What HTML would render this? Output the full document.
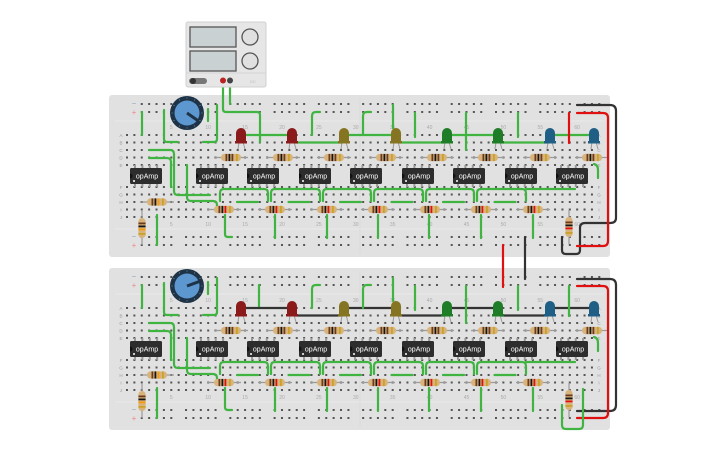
<!DOCTYPE html>
<html><head><meta charset="utf-8"><style>
html,body{margin:0;padding:0;background:#fff;width:725px;height:453px;overflow:hidden}
svg{display:block}
</style></head><body>
<svg id="s" width="725" height="453" viewBox="0 0 725 453" xmlns="http://www.w3.org/2000/svg" font-family="Liberation Sans, sans-serif"></svg>
<script>
var o='';
function X(c){return 127+(c+1)*7.38;}
var G='#3fb441';
function wire(d,col,w){o+='<path d="'+d+'" fill="none" stroke="'+(col||G)+'" stroke-width="'+(w||2.2)+'" stroke-linecap="round" stroke-linejoin="round"/>';}
function res(cx,cy,bands,vert){
 var t=vert?'rotate(90 '+cx+' '+cy+')':'';
 o+='<g transform="'+t+'"><line x1="'+(cx-17)+'" y1="'+cy+'" x2="'+(cx+17)+'" y2="'+cy+'" stroke="#9a9a9a" stroke-width="1.2"/>';
 o+='<rect x="'+(cx-10)+'" y="'+(cy-3.6)+'" width="20" height="7.2" rx="3.4" fill="#d8b47c"/>';
 var xs=[-5.5,-2.5,0.5,5];var cs=bands.concat(['#c9a227']);
 for(var i=0;i<4;i++)o+='<rect x="'+(cx+xs[i])+'" y="'+(cy-3.6)+'" width="1.8" height="7.2" fill="'+cs[i]+'"/>';
 o+='</g>';
}
var BR='#6b3a1f',BK='#151515',RD='#e01010',OR='#f39c12';
function led(cx,cy,col){
 o+='<line x1="'+(cx-2)+'" y1="'+(cy+6)+'" x2="'+(cx-3)+'" y2="'+(cy+13)+'" stroke="#999" stroke-width="1"/><line x1="'+(cx+2)+'" y1="'+(cy+6)+'" x2="'+(cx+4)+'" y2="'+(cy+13)+'" stroke="#999" stroke-width="1"/>';
 o+='<path d="M'+(cx-5)+','+(cy+7)+' V'+(cy-3)+' A5,5 0 0 1 '+(cx+5)+','+(cy-3)+' V'+(cy+7)+' Z" fill="'+col+'"/>';
 o+='<rect x="'+(cx-6)+'" y="'+(cy+5)+'" width="12" height="2.5" fill="'+col+'"/>';
}
function opamp(cx,cy){
 for(var i=0;i<4;i++){var px=cx-11+i*7.38;o+='<rect x="'+(px-1)+'" y="'+(cy-11)+'" width="2" height="4" fill="#999"/><rect x="'+(px-1)+'" y="'+(cy+7)+'" width="2" height="4" fill="#999"/>';}
 o+='<rect x="'+(cx-16)+'" y="'+(cy-8)+'" width="32" height="16" rx="1.5" fill="#2d2d2d"/>';
 o+='<path d="M'+(cx-16)+','+(cy-2.5)+' a2.5,2.5 0 0 1 0,5z" fill="#111"/>';
 o+='<circle cx="'+(cx-12)+'" cy="'+(cy+5)+'" r="1" fill="#fff"/>';
 o+='<text x="'+(cx+1)+'" y="'+(cy+2.5)+'" font-size="7" fill="#fff" text-anchor="middle">opAmp</text>';
}
function pot(cx,cy,ang){
 o+='<circle cx="'+cx+'" cy="'+cy+'" r="17" fill="#1e3347"/><circle cx="'+cx+'" cy="'+cy+'" r="12.5" fill="#5d97d0"/>';
 for(var i=0;i<12;i++){var a=i*Math.PI/6;o+='<circle cx="'+(cx+15*Math.cos(a))+'" cy="'+(cy+15*Math.sin(a))+'" r="0.5" fill="#7aa"/>';}
 var a=ang*Math.PI/180;o+='<line x1="'+cx+'" y1="'+cy+'" x2="'+(cx+14*Math.cos(a))+'" y2="'+(cy+14*Math.sin(a))+'" stroke="#1e3347" stroke-width="3"/>';
}
function board(dy,second){
 o+='<rect x="109" y="'+(95+dy)+'" width="501" height="162" rx="3" fill="#e1e1e1"/>';
 o+='<line x1="115" y1="'+(121+dy)+'" x2="604" y2="'+(121+dy)+'" stroke="#e9e9e9" stroke-width="1"/><line x1="115" y1="'+(229+dy)+'" x2="604" y2="'+(229+dy)+'" stroke="#e9e9e9" stroke-width="1"/>';
 o+='<line x1="360" y1="'+(98+dy)+'" x2="360" y2="'+(254+dy)+'" stroke="#d6d6d6" stroke-width="0.6"/>';
 var ry=[104,112,237,245];
 for(var r=0;r<4;r++)for(var i=0;i<63;i++){if(i%6==5)continue;o+='<rect x="'+(X(1)+i*7.38-1)+'" y="'+(ry[r]+dy-1)+'" width="2" height="2" fill="#555"/>';}
 var rows=[135,142.5,150,157.5,165,187,194.5,202,209.5,217];var L='ABCDEFGHIJ';
 for(var r=0;r<10;r++){for(var c=-1;c<=62;c++)o+='<rect x="'+(X(c)-1)+'" y="'+(rows[r]+dy-1)+'" width="2" height="2" fill="#555"/>';
  o+='<text x="121" y="'+(rows[r]+dy+1.8)+'" font-size="4.5" fill="#999" text-anchor="middle">'+L[r]+'</text><text x="599" y="'+(rows[r]+dy+1.8)+'" font-size="4.5" fill="#999" text-anchor="middle">'+L[r]+'</text>';}
 for(var n=5;n<=60;n+=5){o+='<text x="'+X(n)+'" y="'+(129+dy)+'" font-size="5" fill="#aaa" text-anchor="middle">'+n+'</text><text x="'+X(n)+'" y="'+(226+dy)+'" font-size="5" fill="#aaa" text-anchor="middle">'+n+'</text>';}
 o+='<text x="134" y="'+(106+dy)+'" font-size="8" fill="#8ab" text-anchor="middle">−</text><text x="134" y="'+(115+dy)+'" font-size="8" fill="#e88" text-anchor="middle">+</text>';
 o+='<text x="134" y="'+(239+dy)+'" font-size="8" fill="#8ab" text-anchor="middle">−</text><text x="134" y="'+(248+dy)+'" font-size="8" fill="#e88" text-anchor="middle">+</text>';
 function W(d,c){wire(d.replace(/Y(-?[\d.]+)/g,function(m,v){return (parseFloat(v)+dy);}),c);}
 W('M142,Y112 VY135');
 W('M164,Y110 VY139 Q164,Y142 167,Y142 H178');
 W('M217,Y105 VY139 Q217,Y142 214,Y142 H203');
 W('M208,Y109 VY121');
 if(!second){wire('M223,80 V109 Q223,112 226,112 H257 Q260,112 260,115 V142');wire('M230,80 V104');}
 else W('M259,Y112 VY135');
 W('M149,Y150 H170 Q174,Y150 174,Y154 VY191 Q174,Y195 178,Y195 H210');
 W('M149,Y158 H167 Q171,Y158 171,Y162 VY187');
 W('M187,Y165 VY197 Q187,Y201 191,Y201 H213 Q217,Y201 217,Y205 VY209');
 var ax=[217,268,320,371,423,474,526];
 for(var i=0;i<ax.length-1;i++){var a=ax[i]+3,b=ax[i+1];W('M'+a+',Y201 VY193 Q'+a+',Y189 '+(a+4)+',Y189 H'+(b-4)+' Q'+b+',Y189 '+b+',Y193 VY201');}
 W('M526,Y189 H575');
 for(var i=0;i<6;i++){var s=237+i*51.5;W('M'+s+',Y202 H'+(s+21));}
 W('M157,Y215 VY245');
 W('M225,Y215 VY234 Q225,Y237 228,Y237 H232');
 [275,327,378,429,481,533].forEach(function(x){W('M'+x+',Y215 VY238');});
 var lx=[241,292,344,396,447,498,550,594];
 for(var i=0;i<7;i++){var yy=(i%2==0)?135:142.5;W('M'+(lx[i]+3)+',Y'+yy+' H'+(lx[i+1]-2),second?'#333':G);}
 W('M312,Y135 VY116 Q312,Y112 316,Y112 H320');
 W('M363,Y135 VY116 Q363,Y112 367,Y112 H371');
 W('M393,Y105 VY128');W('M415,Y113 VY137');W('M466,Y113 VY150');W('M518,Y113 VY137');
 W('M569,Y113 VY143',second?G:'#e01010');
 W('M594,Y164 Q598,Y165 598,Y170 VY178');
 pot(187,113+dy,second?-20:35);
 var lc=['#8b1a1a','#8b1a1a','#857421','#857421','#1f7d27','#1f7d27','#1f5e85','#1f5e85'];
 for(var i=0;i<8;i++)led(lx[i],136+dy,lc[i]);
 [231,283,334,386,437,488,540,592].forEach(function(x){res(x,157.5+dy,[BR,BK,BR]);});
 [224,275,327,378,430,481,533].forEach(function(x){res(x,209.5+dy,[BR,BK,RD]);});
 res(157,202+dy,[BR,BK,OR]);
 res(142,228+dy,[BR,BK,OR],true);
 res(569,227+dy,[BR,BK,RD],true);
 [146,212,263,315,366,418,469,521,572].forEach(function(x){opamp(x,176+dy);});
}
board(0,false);
board(173,true);
wire('M577,105 H610 Q616,105 616,111 V218 Q616,223 610,223 H585 Q580,223 580,228 V250 Q580,254 576,254 H566 Q562,254 562,250 V237','#333');
wire('M577,113 H603 Q608,113 608,118 V241 Q608,246 603,246 H577','#e01010');
wire('M503,245 V287','#e01010');
wire('M525,237 V279','#333');
wire('M577,279 H610 Q616,279 616,285 V405 Q616,411 610,411 H577','#333');
wire('M577,286 H603 Q608,286 608,291 V413 Q608,418 603,418 H577','#e01010');
wire('M562,405 V425 Q562,429 566,429 H579 Q583,429 583,425 V389');
o+='<rect x="186" y="22" width="80" height="65" rx="2" fill="#e6e6e6" stroke="#d0d0d0"/>';
o+='<rect x="190" y="27" width="46" height="20" fill="#c9d1d3" stroke="#555" stroke-width="1.3"/><rect x="190" y="51" width="46" height="20" fill="#c9d1d3" stroke="#555" stroke-width="1.3"/>';
o+='<circle cx="250" cy="37" r="8" fill="#e0e0e0" stroke="#555" stroke-width="1.3"/><circle cx="250" cy="61" r="8" fill="#e0e0e0" stroke="#555" stroke-width="1.3"/>';
o+='<line x1="186" y1="73" x2="266" y2="73" stroke="#d4d4d4"/>';
o+='<rect x="189" y="78" width="18" height="6" rx="3" fill="#777"/><circle cx="193" cy="81" r="3" fill="#333"/>';
o+='<circle cx="223" cy="80.5" r="3" fill="#b22"/><circle cx="230" cy="80.5" r="3" fill="#444"/>';
o+='<text x="250" y="83" font-size="4" fill="#bbb">DC</text>';
document.getElementById('s').innerHTML=o;
</script>
</body></html>
